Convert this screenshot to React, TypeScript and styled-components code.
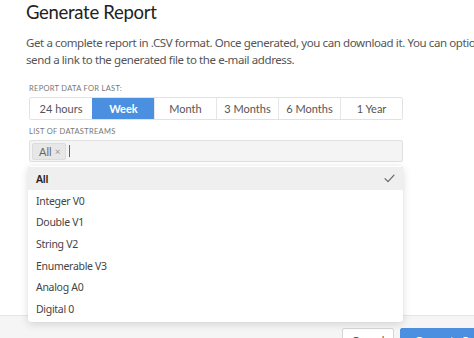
import React from "react";
import styled, { createGlobalStyle } from "styled-components";

const Global = createGlobalStyle`
  html, body { margin: 0; padding: 0; background: #fff; }
  body { width: 474px; height: 338px; overflow: hidden; }
  #root { width: 474px; height: 338px; overflow: hidden; }
  * { box-sizing: border-box; }
`;

const Modal = styled.div`
  width: 520px;
  height: 338px;
  background: #fff;
  position: relative;
  display: flex;
  flex-direction: column;
`;

const Body = styled.div`
  height: 315px;
  flex-shrink: 0;
  padding: 0 0 0 26px;
  display: flex;
  flex-direction: column;
`;

const Title = styled.h1`
  margin: 0;
  padding-top: 2px;
  font-family: "Lato", "Open Sans", sans-serif;
  font-weight: 400;
  font-size: 18.5px;
  line-height: 21px;
  color: #222;
  letter-spacing: -0.3px;
`;

const Description = styled.p`
  margin: 12px 0 0 0;
  font-family: "Noto Sans", "Open Sans", sans-serif;
  font-size: 11.5px;
  letter-spacing: -0.4px;
  line-height: 16.5px;
  color: #555;
  white-space: nowrap;
`;

const Form = styled.div`
  margin-top: 16px;
  padding-left: 3px;
  position: relative;
  width: 377px;
`;

const Label = styled.div<{ $gap?: number }>`
  font-family: "Lato", "Open Sans", sans-serif;
  font-size: 7.5px;
  letter-spacing: 0.3px;
  text-transform: uppercase;
  color: #777;
  line-height: 9px;
  margin-top: ${(p) => p.$gap ?? 0}px;
  margin-bottom: 4px;
`;

const Segmented = styled.div`
  display: grid;
  grid-template-columns: repeat(6, 1fr);
  width: 374px;
  height: 23px;
  border: 1px solid #e2e2e2;
  border-radius: 2px;
  overflow: hidden;
`;

const Segment = styled.div<{ $active?: boolean }>`
  display: flex;
  align-items: center;
  justify-content: center;
  font-family: "Lato", "Open Sans", sans-serif;
  font-size: 11px;
  font-weight: ${(p) => (p.$active ? 700 : 400)};
  color: ${(p) => (p.$active ? "#fff" : "#555")};
  background: ${(p) => (p.$active ? "#4a8fe0" : "#fff")};
  border-left: 1px solid ${(p) => (p.$active ? "#4a8fe0" : "#e6e6e6")};
  &:first-child { border-left: none; }
`;

const Input = styled.div`
  width: 374px;
  height: 22px;
  background: #f4f4f4;
  border: 1px solid #e0e0e0;
  border-radius: 2px;
  display: flex;
  align-items: center;
  padding-left: 2px;
  gap: 3px;
`;

const Tag = styled.div`
  height: 17px;
  display: flex;
  align-items: center;
  gap: 3px;
  padding: 0 5px 0 6px;
  background: #e7e7e7;
  border: 1px solid #dcdcdc;
  border-radius: 2px;
  font-family: "Lato", "Open Sans", sans-serif;
  font-size: 11px;
  color: #666;
`;

const TagX = styled.span`
  font-size: 10px;
  color: #999;
`;

const Caret = styled.div`
  width: 1px;
  height: 12px;
  background: #666;
`;

const Dropdown = styled.div`
  position: absolute;
  left: 2px;
  top: 82px;
  width: 375px;
  background: #fff;
  border-radius: 3px;
  box-shadow: 0 2px 8px rgba(0, 0, 0, 0.14), 0 0 1px rgba(0,0,0,0.08);
  padding: 1px 0 2px;
  z-index: 5;
`;

const Option = styled.div<{ $selected?: boolean }>`
  height: ${(p) => (p.$selected ? 23 : 21.6)}px;
  display: flex;
  align-items: center;
  justify-content: space-between;
  padding: 0 8px 0 8px;
  background: ${(p) => (p.$selected ? "#efefef" : "#fff")};
  font-family: "Noto Sans", "Open Sans", sans-serif;
  font-size: 10.5px;
  letter-spacing: -0.3px;
  font-weight: ${(p) => (p.$selected ? 600 : 400)};
  color: ${(p) => (p.$selected ? "#222" : "#444")};
`;

const Footer = styled.div`
  flex: 1;
  background: #f5f5f5;
  border-top: 1px solid #e6e6e6;
  display: flex;
  justify-content: flex-end;
  align-items: flex-start;
  padding: 12px 10px 0 0;
  gap: 6px;
`;

const Button = styled.div<{ $primary?: boolean }>`
  height: 24px;
  width: ${(p) => (p.$primary ? 110 : 52)}px;
  display: flex;
  align-items: center;
  justify-content: center;
  border-radius: 2px;
  font-family: "Lato", "Open Sans", sans-serif;
  font-size: 11px;
  color: ${(p) => (p.$primary ? "#fff" : "#555")};
  background: ${(p) => (p.$primary ? "#4a8fe0" : "#fff")};
  border: 1px solid ${(p) => (p.$primary ? "#4a8fe0" : "#d6d6d6")};
`;

const periods = ["24 hours", "Week", "Month", "3 Months", "6 Months", "1 Year"];
const streams = ["All", "Integer V0", "Double V1", "String V2", "Enumerable V3", "Analog A0", "Digital 0"];

const Check = () => (
  <svg width="11" height="9" viewBox="0 0 11 9" fill="none">
    <path d="M1 4.6 L4 7.6 L10 1.2" stroke="#666" strokeWidth="1.2" strokeLinecap="round" strokeLinejoin="round" />
  </svg>
);

export default function App() {
  return (
    <>
      <Global />
      <Modal>
        <Body>
          <Title>Generate Report</Title>
          <Description>
            Get a complete report in .CSV format. Once generated, you can download it. You can optionally
            <br />
            send a link to the generated file to the e-mail address.
          </Description>
          <Form>
            <Label>Report data for last:</Label>
            <Segmented>
              {periods.map((p) => (
                <Segment key={p} $active={p === "Week"}>{p}</Segment>
              ))}
            </Segmented>
            <Label $gap={7}>List of datastreams</Label>
            <Input>
              <Tag>All <TagX>×</TagX></Tag>
              <Caret />
            </Input>
            <Dropdown>
              {streams.map((s, i) => (
                <Option key={s} $selected={i === 0}>
                  {s}
                  {i === 0 && <Check />}
                </Option>
              ))}
            </Dropdown>
          </Form>
        </Body>
        <Footer>
          <Button>Cancel</Button>
          <Button $primary>Generate Report</Button>
        </Footer>
      </Modal>
    </>
  );
}
